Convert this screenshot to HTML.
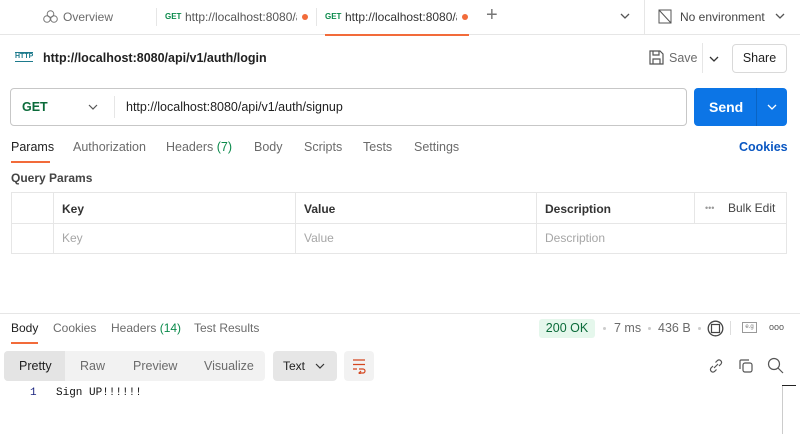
<!DOCTYPE html>
<html><head><meta charset="utf-8"><style>
*{margin:0;padding:0;box-sizing:border-box}
body{width:800px;height:434px;overflow:hidden;background:#fff;font-family:"Liberation Sans",sans-serif;font-size:12px;color:#212121;position:relative}
.a{position:absolute;white-space:nowrap}
.g{color:#6b6b6b}
.b{font-weight:bold}
</style></head><body>
<div class="a" style="left:0;top:0;width:800px;height:35px;border-bottom:1px solid #e6e6e6"></div>
<svg class="a" style="left:43px;top:10px" width="15" height="13" viewBox="0 0 15 13"><circle cx="7.5" cy="4" r="3.3" fill="none" stroke="#777"/><circle cx="4" cy="9" r="3.3" fill="none" stroke="#777"/><circle cx="11" cy="9" r="3.3" fill="none" stroke="#777"/></svg>
<div class="a g" style="left:63px;top:10px;font-size:12px">Overview</div>
<div class="a" style="left:156px;top:8px;width:1px;height:18px;background:#e6e6e6"></div>
<div class="a" style="left:165px;top:12px;font-size:8px;color:#0b8a4b;font-weight:bold">GET</div>
<div class="a" style="left:185px;top:10px;color:#555;width:112px;overflow:hidden">http://localhost:8080/api</div>
<div class="a" style="left:302px;top:14px;width:6px;height:6px;border-radius:50%;background:#f26b3a"></div>
<div class="a" style="left:316px;top:8px;width:1px;height:18px;background:#e6e6e6"></div>
<div class="a" style="left:325px;top:12px;font-size:8px;color:#0b8a4b;font-weight:bold">GET</div>
<div class="a" style="left:345px;top:10px;color:#333;width:112px;overflow:hidden">http://localhost:8080/api</div>
<div class="a" style="left:462px;top:14px;width:6px;height:6px;border-radius:50%;background:#f26b3a"></div>
<div class="a" style="left:325px;top:34px;width:144px;height:2px;background:#f26b3a"></div>
<div class="a" style="left:486px;top:4px;font-size:20px;color:#777;font-weight:300">+</div>
<svg class="a" style="left:620px;top:13px" width="10" height="7"><path d="M1 1l4 4 4-4" fill="none" stroke="#555" stroke-width="1.3"/></svg>
<div class="a" style="left:644px;top:0;width:1px;height:35px;background:#e6e6e6"></div>
<svg class="a" style="left:658px;top:9px" width="14" height="15"><rect x="1" y="1" width="12" height="13" fill="none" stroke="#555"/><path d="M1 1l12 13" stroke="#555"/></svg>
<div class="a" style="left:680px;top:10px;color:#444">No environment</div>
<svg class="a" style="left:775px;top:13px" width="10" height="7"><path d="M1 1l4 4 4-4" fill="none" stroke="#555" stroke-width="1.3"/></svg>
<div class="a" style="left:15px;top:52px;font-size:7px;font-weight:bold;color:#1d7a8c;border-top:1px solid #1d7a8c;border-bottom:1px solid #1d7a8c;line-height:8px">HTTP</div>
<div class="a b" style="left:43px;top:51px;font-size:12.5px">http://localhost:8080/api/v1/auth/login</div>
<svg class="a" style="left:649px;top:50px" width="15" height="15"><path d="M1 1h10l3 3v10H1z M4 1v4h6V1 M4 14V9h7v5" fill="none" stroke="#555" stroke-width="1.2"/></svg>
<div class="a g" style="left:669px;top:51px;font-size:12.5px">Save</div>
<div class="a" style="left:702px;top:43px;width:1px;height:30px;background:#e6e6e6"></div>
<svg class="a" style="left:709px;top:56px" width="10" height="7"><path d="M1 1l4 4 4-4" fill="none" stroke="#333" stroke-width="1.3"/></svg>
<div class="a" style="left:732px;top:44px;width:55px;height:29px;border:1px solid #d9d9d9;border-radius:4px;text-align:center;line-height:27px;font-size:12.5px">Share</div>
<div class="a" style="left:10px;top:88px;width:677px;height:38px;border:1px solid #c7c7c7;border-radius:4px"></div>
<div class="a b" style="left:22px;top:100px;color:#0b6b3a;font-size:12.5px">GET</div>
<svg class="a" style="left:88px;top:104px" width="10" height="7"><path d="M1 1l4 4 4-4" fill="none" stroke="#555" stroke-width="1.2"/></svg>
<div class="a" style="left:114px;top:96px;width:1px;height:22px;background:#e6e6e6"></div>
<div class="a" style="left:126px;top:100px;font-size:12.5px">http://localhost:8080/api/v1/auth/signup</div>
<div class="a" style="left:694px;top:88px;width:93px;height:38px;background:#0c75e6;border-radius:4px"></div>
<div class="a" style="left:756px;top:88px;width:1px;height:38px;background:#0a64c4"></div>
<div class="a b" style="left:709px;top:99px;color:#fff;font-size:14px">Send</div>
<svg class="a" style="left:767px;top:104px" width="10" height="7"><path d="M1 1l4 4 4-4" fill="none" stroke="#fff" stroke-width="1.3"/></svg>
<div class="a" style="left:11px;top:140px;font-size:12.5px">Params</div>
<div class="a" style="left:11px;top:161px;width:39px;height:2px;background:#f26b3a"></div>
<div class="a g" style="left:73px;top:140px;font-size:12.5px">Authorization</div>
<div class="a g" style="left:166px;top:140px;font-size:12.5px">Headers <span style="color:#0b8a4b">(7)</span></div>
<div class="a g" style="left:254px;top:140px;font-size:12.5px">Body</div>
<div class="a g" style="left:304px;top:140px;font-size:12.5px">Scripts</div>
<div class="a g" style="left:363px;top:140px;font-size:12.5px">Tests</div>
<div class="a g" style="left:414px;top:140px;font-size:12.5px">Settings</div>
<div class="a b" style="left:739px;top:140px;color:#0a57c2;font-size:12.5px">Cookies</div>
<div class="a b" style="left:11px;top:171px;color:#444">Query Params</div>
<div class="a" style="left:11px;top:192px;width:776px;height:62px;border:1px solid #e6e6e6"></div>
<div class="a" style="left:12px;top:223px;width:774px;height:1px;background:#e6e6e6"></div>
<div class="a" style="left:53px;top:193px;width:1px;height:60px;background:#e6e6e6"></div>
<div class="a" style="left:295px;top:193px;width:1px;height:60px;background:#e6e6e6"></div>
<div class="a" style="left:536px;top:193px;width:1px;height:60px;background:#e6e6e6"></div>
<div class="a" style="left:694px;top:193px;width:1px;height:30px;background:#e6e6e6"></div>
<div class="a b" style="left:62px;top:202px;color:#333">Key</div>
<div class="a b" style="left:304px;top:202px;color:#333">Value</div>
<div class="a b" style="left:545px;top:202px;color:#333">Description</div>
<div class="a" style="left:705px;top:203px;color:#999;font-size:9px">•••</div>
<div class="a" style="left:728px;top:201px;color:#444">Bulk Edit</div>
<div class="a" style="left:62px;top:231px;color:#a6a6a6">Key</div>
<div class="a" style="left:304px;top:231px;color:#a6a6a6">Value</div>
<div class="a" style="left:545px;top:231px;color:#a6a6a6">Description</div>
<div class="a" style="left:0;top:313px;width:800px;height:1px;background:#e6e6e6"></div>
<div class="a" style="left:11px;top:321px;font-size:12px">Body</div>
<div class="a" style="left:11px;top:342px;width:27px;height:2px;background:#f26b3a"></div>
<div class="a g" style="left:53px;top:321px;font-size:12px">Cookies</div>
<div class="a g" style="left:111px;top:321px;font-size:12px">Headers <span style="color:#0b8a4b">(14)</span></div>
<div class="a g" style="left:194px;top:321px;font-size:12px">Test Results</div>
<div class="a" style="left:539px;top:319px;width:56px;height:19px;background:#e5f7ec;border-radius:3px;color:#0b6b3a;text-align:center;line-height:19px;font-size:12.5px">200 OK</div>
<div class="a" style="left:603px;top:327px;width:3px;height:3px;border-radius:50%;background:#ccc"></div>
<div class="a g" style="left:614px;top:321px;font-size:12.5px">7 ms</div>
<div class="a" style="left:648px;top:327px;width:3px;height:3px;border-radius:50%;background:#ccc"></div>
<div class="a g" style="left:658px;top:321px;font-size:12.5px">436 B</div>
<div class="a" style="left:698px;top:327px;width:3px;height:3px;border-radius:50%;background:#ccc"></div>
<svg class="a" style="left:707px;top:320px" width="17" height="17"><circle cx="8.5" cy="8.5" r="7.3" fill="none" stroke="#444" stroke-width="1.3"/><rect x="4.5" y="4.5" width="8" height="8" fill="none" stroke="#444" stroke-width="1.2"/></svg>
<div class="a" style="left:730px;top:321px;width:1px;height:14px;background:#ddd"></div>
<div class="a" style="left:742px;top:322px;width:15px;height:11px;border:1px solid #999;font-size:6px;color:#777;text-align:center;line-height:9px">e.g</div>
<div class="a" style="left:769px;top:322px;font-size:9px;color:#555">ooo</div>
<div class="a" style="left:4px;top:351px;width:261px;height:30px;background:#f2f2f2;border-radius:4px"></div>
<div class="a" style="left:4px;top:351px;width:61px;height:30px;background:#e4e4e4;border-radius:4px 0 0 4px"></div>
<div class="a" style="left:19px;top:359px;font-size:12.5px">Pretty</div>
<div class="a g" style="left:80px;top:359px;font-size:12.5px">Raw</div>
<div class="a g" style="left:133px;top:359px;font-size:12.5px">Preview</div>
<div class="a g" style="left:204px;top:359px;font-size:12.5px">Visualize</div>
<div class="a" style="left:273px;top:351px;width:64px;height:30px;background:#e6e6e6;border-radius:4px"></div>
<div class="a" style="left:283px;top:359px">Text</div>
<svg class="a" style="left:315px;top:363px" width="10" height="7"><path d="M1 1l4 4 4-4" fill="none" stroke="#333" stroke-width="1.2"/></svg>
<div class="a" style="left:344px;top:351px;width:30px;height:30px;background:#f2f2f2;border-radius:4px"></div>
<svg class="a" style="left:351px;top:358px" width="16" height="16"><path d="M2 2h12 M2 6.5h12 M2 11h4 M8 11h4a2 2 0 0 1 0 4h-3 M10 13l-2 2 2 2" fill="none" stroke="#d4461f" stroke-width="1.2"/></svg>
<svg class="a" style="left:708px;top:358px" width="16" height="16"><path d="M6 10l4-4 M7.5 4.5l2-2a2.5 2.5 0 0 1 3.5 3.5l-2 2 M8.5 11.5l-2 2a2.5 2.5 0 0 1-3.5-3.5l2-2" fill="none" stroke="#555" stroke-width="1.2"/></svg>
<svg class="a" style="left:738px;top:358px" width="16" height="16"><rect x="5" y="5" width="9" height="9" rx="2" fill="none" stroke="#555" stroke-width="1.2"/><path d="M2 11V3a1 1 0 0 1 1-1h8" fill="none" stroke="#555" stroke-width="1.2"/></svg>
<svg class="a" style="left:767px;top:357px" width="17" height="17"><circle cx="7" cy="7" r="5.5" fill="none" stroke="#555" stroke-width="1.2"/><path d="M11 11l5 5" stroke="#555" stroke-width="1.2"/></svg>
<div class="a" style="left:30px;top:387px;font-family:'Liberation Mono',monospace;color:#1a237e;font-size:11px">1</div>
<div class="a" style="left:56px;top:387px;font-family:'Liberation Mono',monospace;font-size:11px;color:#111">Sign UP!!!!!!</div>
<div class="a" style="left:782px;top:385px;width:14px;height:1px;background:#222"></div>
<div class="a" style="left:782px;top:386px;width:1px;height:48px;background:#ccc"></div>
</body></html>
